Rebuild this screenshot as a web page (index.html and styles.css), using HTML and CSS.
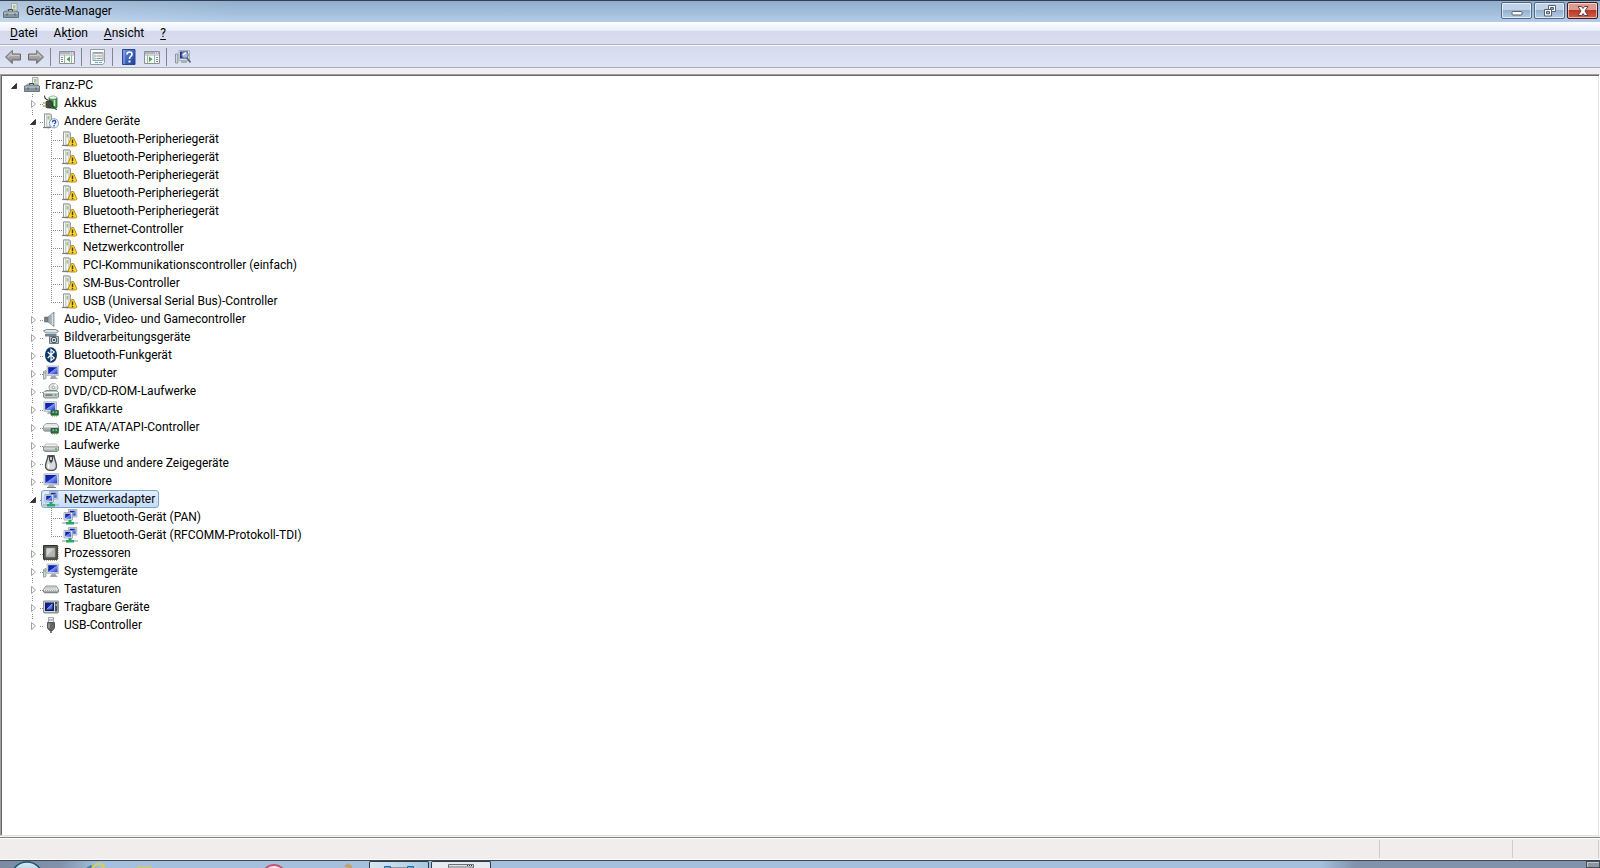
FILE: index.html
```html
<!DOCTYPE html>
<html lang="de">
<head>
<meta charset="utf-8">
<title>Geräte-Manager</title>
<link rel="stylesheet" href="styles.css">
</head>
<body>
<svg class="sprite" aria-hidden="true">
  <defs>
    <linearGradient id="metal" x1="0" y1="0" x2="0" y2="1"><stop offset="0" stop-color="#f4f5f5"/><stop offset="1" stop-color="#929a9e"/></linearGradient>
    <linearGradient id="screen" x1="0" y1="0" x2="1" y2="1"><stop offset="0" stop-color="#0a1ca0"/><stop offset=".45" stop-color="#1428b4"/><stop offset=".5" stop-color="#7d98f0"/><stop offset="1" stop-color="#2038c8"/></linearGradient>
    <linearGradient id="arrow" x1="0" y1="0" x2="0" y2="1"><stop offset="0" stop-color="#c4c4c4"/><stop offset="1" stop-color="#858585"/></linearGradient>
    <linearGradient id="help" x1="0" y1="0" x2="1" y2="1"><stop offset="0" stop-color="#6a90dc"/><stop offset="1" stop-color="#1e3ea0"/></linearGradient>
    <linearGradient id="orb" x1="0" y1="0" x2="0" y2="1"><stop offset="0" stop-color="#d4eaf4"/><stop offset="1" stop-color="#6c9cba"/></linearGradient>

    <symbol id="i-open" viewBox="0 0 19 18"><path d="M11.500 7.500v5h-5z" fill="#333" stroke="#222" stroke-width=".8"/></symbol>
    <symbol id="i-closed" viewBox="0 0 19 18"><path d="M7.500 6.500l4 3.500-4 3.500z" fill="#fff" stroke="#a2a2a2"/></symbol>

    <symbol id="i-tower" viewBox="0 0 16 16"><path d="M1.500.8h5.500l1.500 1v12l-3 1.200-4-1z" fill="#dde1dd" stroke="#82888a" stroke-width=".8"/><path d="M2.600 2v11.500" stroke="#fff"/><path d="M3.800 1.500h3v12h-3z" fill="#f4f6f2" stroke="#a3aaa3" stroke-width=".6"/><path d="M4.500 3h1.700v3.500H4.500z" fill="#9dc684"/><path d="M0 14.600h8" stroke="#6f7577"/></symbol>
    <symbol id="i-root" viewBox="0 0 16 16"><path d="M8.500.5h5.500v9H8.500z" fill="#e4e9e4" stroke="#949a9a" stroke-width=".8"/><path d="M10 2h2.500v3.500H10z" fill="#a4c890"/><path d="M1.500 9l2-2h9l2.500 2z" fill="#c6cfd4" stroke="#6b767c" stroke-width=".7"/><path d="M.5 9h15v5.500H.5z" fill="#8595a0" stroke="#55616a" stroke-width=".8"/><path d="M1 10h14" stroke="#d5dde2"/><path d="M5.500 8V6.500h4V8M4 10.500v2M12 10.500v2" stroke="#404d57" fill="none"/></symbol>
    <symbol id="i-battery" viewBox="0 0 16 16"><path d="M6 2.500q4.500-2 8 0v10q-3.500 2-8 0z" fill="#3b9d4b" stroke="#246330" stroke-width=".8"/><ellipse cx="10" cy="2.500" rx="3.700" ry="1.600" fill="#f2f4f0" stroke="#8f9a90" stroke-width=".6"/><path d="M11.500 5v6" stroke="#b9eab6" stroke-width="1.600"/><path d="M3 6.500q5-2 6.500 1.300v3.500q-2 3-6.500 1z" fill="#454941" stroke="#20241c" stroke-width=".7"/><path d="M0 8h3.500M0 11h3.500" stroke="#a48d4a" stroke-width="1.200"/><path d="M1.500.5q0 3.500 3.500 4.500M9 10q2 4 5 4.500" stroke="#30362d" stroke-width="1.100" fill="none"/></symbol>
    <symbol id="i-unknown" viewBox="0 0 16 16"><use href="#i-tower"/><circle cx="11" cy="10.300" r="4.600" fill="#eef4fc" stroke="#8598b4" stroke-width=".9"/><path d="M9.400 9.200q0-1.700 1.700-1.700t1.700 1.400q0 1-1.700 2.100" stroke="#2950a8" stroke-width="1.300" fill="none"/><path d="M10.400 12h1.300v1.400h-1.300z" fill="#2950a8"/></symbol>
    <symbol id="i-warn" viewBox="0 0 16 16"><use href="#i-tower"/><path d="M8 15l-2-1 3.500-7.500h2L15 14l-1.500 1z" fill="#fcd535" stroke="#b8901c" stroke-linejoin="round"/><path d="M10.500 8.500v3.500M10.500 12.800v1.400" stroke="#4a3700" stroke-width="1.400"/></symbol>
    <symbol id="i-audio" viewBox="0 0 16 16"><path d="M1.500 6h3.500v5H1.500z" fill="#747e84" stroke="#5b646a" stroke-width=".6"/><path d="M5 6l6-5v14.500L5 11z" fill="#a5afb5" stroke="#727c82" stroke-width=".7"/><path d="M9.500 3v11" stroke="#d9e0e4" stroke-width="1.500"/></symbol>
    <symbol id="i-imaging" viewBox="0 0 16 16"><path d="M.5 2l3-1.500h9L15.500 2l-2 2H3z" fill="#dce6e8" stroke="#617078" stroke-width=".8"/><path d="M2 5h11.500v2.500H2z" fill="#6a8791"/><path d="M6.500 7.500h9v7h-9z" fill="#b9c4c9" stroke="#526067" stroke-width=".8"/><circle cx="11" cy="11" r="2.800" fill="#f0f6f8" stroke="#36444c"/><circle cx="11" cy="11" r="1.300" fill="#2f608a"/></symbol>
    <symbol id="i-bt" viewBox="0 0 16 16"><ellipse cx="8" cy="8" rx="6" ry="7.800" fill="#0c3768"/><path d="M4.700 5l6.500 6L8 13.600V2.400L11.200 5l-6.500 6" fill="none" stroke="#fff" stroke-width="1.200"/></symbol>
    <symbol id="i-monitor" viewBox="0 0 16 16"><path d="M1 .8h14.500v11H1z" fill="#e2e5e8" stroke="#a1a9b0" stroke-width=".8"/><path d="M2.300 2h11.900v8.400H2.300z" fill="url(#screen)"/><path d="M6 12h4.500l1.500 2.500H4.500z" fill="#a9b3b9"/><path d="M4 14.500h9" stroke="#747d82"/></symbol>
    <symbol id="i-computer" viewBox="0 0 16 16"><path d="M4 1h11.800v9.500H4z" fill="#dfe3e7" stroke="#a3acb3" stroke-width=".7"/><path d="M5.200 2.200h9.400v7H5.200z" fill="url(#screen)"/><path d="M8.500 11h4l1 2h-6z" fill="#9da7ac"/><path d="M7 13.300h7.500" stroke="#889197"/><path d="M.5 6.500l2.500-1v8l-2.500.8z" fill="#d2d7d5" stroke="#80888b" stroke-width=".7"/><path d="M1.200 8h1.300" stroke="#65a650"/></symbol>
    <symbol id="i-drive" viewBox="0 0 16 16"><path d="M3 7h10l2.500 3H.5z" fill="#f1f2f1" stroke="#a0a5a4" stroke-width=".7"/><path d="M.5 10h15v3.500l-1.500 1H2l-1.500-1z" fill="url(#metal)" stroke="#747b7c" stroke-width=".8"/><path d="M12 12h2" stroke="#42b94a" stroke-width="1.400"/></symbol>
    <symbol id="i-dvd" viewBox="0 0 16 16"><ellipse cx="10.500" cy="4.500" rx="4.500" ry="4" fill="#dde2e0" stroke="#909695" stroke-width=".8"/><path d="M10.500 4.500l3-3" stroke="#fff" stroke-width="2"/><circle cx="10.500" cy="4.500" r="1.300" fill="#fff" stroke="#7a8281" stroke-width=".7"/><path d="M.5 9.500l2.500-2h10.500l2 2V14l-1.500 1h-12l-1.500-1z" fill="#bdc5c5" stroke="#707979" stroke-width=".8"/><path d="M1 9.500h14" stroke="#f2f4f4"/><path d="M2.500 12h7" stroke="#58635f" stroke-width="1.300"/><path d="M11.500 12h2" stroke="#42b94a" stroke-width="1.500"/></symbol>
    <symbol id="i-chip" viewBox="0 0 16 16"><path d="M8 9.500h7.300v4.700H8z" fill="#287548" stroke="#144c2b" stroke-width=".7"/><path d="M9.500 11.200H11M12.500 11.200H14" stroke="#b3d9b7" stroke-width="1.200"/><path d="M9 15h5" stroke="#9a8a31" stroke-dasharray="1 1"/></symbol>
    <symbol id="i-gpu" viewBox="0 0 16 16"><path d="M1 .8h12.500v9.500H1z" fill="#e2e5e8" stroke="#a1a9b0" stroke-width=".8"/><path d="M2.200 2h10v7h-10z" fill="url(#screen)"/><path d="M5 10.500h4l1 2.500H4z" fill="#a9b3b9"/><use href="#i-chip"/></symbol>
    <symbol id="i-ide" viewBox="0 0 16 16"><path d="M3 4.500h10.500L15.500 7v4.500l-1 .7H1.500l-1-1V7z" fill="url(#metal)" stroke="#858d8e" stroke-width=".8"/><path d="M1 7.300h14" stroke="#fff"/><use href="#i-chip"/></symbol>
    <symbol id="i-mouse" viewBox="0 0 16 16"><path d="M5 .7h6q.7 4 2 7.300Q15 15.500 8 15.500T3 8Q4.500 4 5 .7z" fill="#d8dcdd" stroke="#505758" stroke-width="1.400"/><path d="M5.500 1h5l-.8 5L8 8.500 6.300 6z" fill="#3c4243"/><path d="M8 2v3" stroke="#f4f4f4" stroke-width="1.500"/><path d="M5.500 9v4" stroke="#fff" stroke-width="1.500"/></symbol>
    <symbol id="i-net" viewBox="0 0 16 16"><path d="M6.500.5h8.300V8H6.500z" fill="#e1e6eb" stroke="#909ba4" stroke-width=".7"/><path d="M7.700 1.700h6v5h-6z" fill="url(#screen)"/><path d="M2 3.500h8.500V11H2z" fill="#edf0f3" stroke="#8994a0" stroke-width=".7"/><path d="M3.200 4.700h6v5h-6z" fill="url(#screen)"/><path d="M0 14h16" stroke="#a8b8b2" stroke-width="1.400"/><path d="M6.500 11h3v2H12v2.500H4V13h2.500z" fill="#28a568"/></symbol>
    <symbol id="i-cpu" viewBox="0 0 16 16"><path d="M15 1v14M1 15.300h14" stroke="#bda16b" stroke-width="1.400" stroke-dasharray="1 1"/><path d="M.5.500h13.800v13.800H.5z" fill="#555855" stroke="#303230"/><path d="M3 3h9v9H3z" fill="#b3b7b3" stroke="#8f938f" stroke-width=".7"/><path d="M3.500 11V3.500H11z" fill="#d2d5d2"/></symbol>
    <symbol id="i-keyboard" viewBox="0 0 16 16"><path d="M3 5h10.500l2 3.500V11l-1.200.8H1.700L.5 11V8.500z" fill="#e6e8e8" stroke="#7a8183" stroke-width=".9"/><path d="M3.500 6.500h10M2.500 8h12M2 9.500h13" stroke="#92999b" stroke-width=".8" stroke-dasharray="1 1"/><path d="M1 11h14" stroke="#656c6f"/></symbol>
    <symbol id="i-portable" viewBox="0 0 16 16"><path d="M.5 2h15v11.500H.5z" fill="#d2d6db" stroke="#7e868d" stroke-width=".9"/><path d="M2 3.500h9v8.500H2z" fill="#121e50"/><path d="M3.500 4.500h6v6h-6z" fill="url(#screen)"/><path d="M12 3h2.500v9.500H12z" fill="#4a535c"/><circle cx="13.300" cy="6" r=".8" fill="#e3e9ed"/><path d="M1 14.200h14" stroke="#a7afb5"/></symbol>
    <symbol id="i-usb" viewBox="0 0 16 16"><path d="M5.500.5h5v5h-5z" fill="#f0f1f1" stroke="#8c9292" stroke-width=".8"/><path d="M7 2v2M9 2v2" stroke="#888e8e"/><path d="M4.500 5.500h7V11l-2 2.500h-3l-2-2.500z" fill="#636768" stroke="#3e4243" stroke-width=".8"/><path d="M6 6.500V11" stroke="#aeb3b4" stroke-width="1.200"/><path d="M8 13.500V16" stroke="#3e4243" stroke-width="1.400"/></symbol>

    <symbol id="i-arrow" viewBox="0 0 16 16"><path d="M.5 8L7.300 1.500V5H15.500v6H7.300v3.500z" fill="url(#arrow)" stroke="#686868" stroke-linejoin="round"/><path d="M3 8l3.300-3v1.500h8" fill="none" stroke="#d9d9d9" stroke-width=".7"/></symbol>
    <symbol id="i-pane" viewBox="0 0 16 16"><path d="M.5 2.500h15v12H.5z" fill="#f7f8f8" stroke="#8b9197"/><path d="M1 3h14v2H1z" fill="#afb5ba"/><path d="M11 4h1M13 4h1" stroke="#fff"/><path d="M1 6h14M5.500 6v8M12.500 6v8" stroke="#a8afb4"/><path d="M2 8.500h2M2 10.500h2M2 12.500h2" stroke="#7f898e"/><path d="M11 7.500v5.500L7.500 10.200z" fill="#42a846"/></symbol>
    <symbol id="i-panerun" viewBox="0 0 16 16"><path d="M.5 2.500h15v12H.5z" fill="#f7f8f8" stroke="#8b9197"/><path d="M1 3h14v2H1z" fill="#afb5ba"/><path d="M11 4h1M13 4h1" stroke="#fff"/><path d="M1 6h14M3.500 6v8M10.500 6v8" stroke="#a8afb4"/><path d="M12 8.500h2M12 10.500h2M12 12.500h2" stroke="#7f898e"/><path d="M5 7.500V13l3.500-2.800z" fill="#42a846"/></symbol>
    <symbol id="i-props" viewBox="0 0 16 16"><path d="M.5.5h14v13l-1.500 2H.5z" fill="#fafafa" stroke="#969ba0"/><path d="M3 3.500h10v8H3z" fill="#eff2f4" stroke="#999fa5"/><path d="M3.500 4.500h9" stroke="#a5b2bd"/><path d="M4.500 7h1M4.500 9.500h1" stroke="#2d99bd" stroke-width="1.300"/><path d="M6.500 7H12M6.500 9.500H12" stroke="#909aa1"/><path d="M5 13.500h3M9 13.500h3" stroke="#55b5d0"/></symbol>
    <symbol id="i-scan" viewBox="0 0 16 16"><path d="M.5 5h2.300v9H.5z" fill="#d6dcdb" stroke="#798285" stroke-width=".8"/><path d="M4 1.500h10.500v10H4z" fill="#dfe4ea" stroke="#9aa4ae" stroke-width=".8"/><path d="M5 2.500h8v7H5z" fill="#1b2ea3"/><circle cx="10" cy="6" r="3.300" fill="#c7dcf8" fill-opacity=".8" stroke="#677783"/><path d="M8 6l3-2.500" stroke="#fff" stroke-width="1.300"/><path d="M12 9l3.500 4.500" stroke="#59646b" stroke-width="1.800"/><path d="M6 13h6" stroke="#969fa5" stroke-width="1.500"/></symbol>
  </defs>
</svg>

<div class="window">
  <header class="titlebar">
    <svg class="icon"><use href="#i-root"/></svg>
    <h1 class="title">Geräte-Manager</h1>
    <div class="controls">
      <button class="control" aria-label="Minimieren"><svg viewBox="0 0 16 12"><rect x="3" y="6.500" width="10" height="3.500" rx="1" fill="#fff" stroke="#59616b"/></svg></button>
      <button class="control" aria-label="Verkleinern"><svg viewBox="0 0 16 12"><path d="M6.500.5h7v6h-7z" fill="#fff" stroke="#59616b"/><path d="M8.500 2.500h3v2h-3z" fill="#8ba6c4" stroke="#59616b"/><path d="M2.500 4.500h7v6.500h-7z" fill="#fff" stroke="#59616b"/><path d="M4.500 6.500h3v2.300h-3z" fill="#9fb9d6" stroke="#59616b"/></svg></button>
      <button class="control control-close" aria-label="Schließen"><svg viewBox="0 0 16 12"><path d="M3 1.500h3.500l1.500 2 1.500-2H13L10 6l3 4.500H9.500L8 8.500l-1.500 2H3L6 6z" fill="#fff" stroke="#633c40"/></svg></button>
    </div>
  </header>

  <nav class="menubar">
    <button class="menu"><u>D</u>atei</button>
    <button class="menu">Ak<u>t</u>ion</button>
    <button class="menu"><u>A</u>nsicht</button>
    <button class="menu"><u>?</u></button>
  </nav>

  <div class="toolbar" role="toolbar" aria-label="Werkzeuge">
    <button class="tool" aria-label="Zurück"><svg class="icon"><use href="#i-arrow"/></svg></button>
    <button class="tool" aria-label="Vorwärts"><svg class="icon flip"><use href="#i-arrow"/></svg></button>
    <span class="separator"></span>
    <button class="tool" aria-label="Konsolenstruktur"><svg class="icon"><use href="#i-pane"/></svg></button>
    <span class="separator"></span>
    <button class="tool" aria-label="Eigenschaften"><svg class="icon"><use href="#i-props"/></svg></button>
    <span class="separator"></span>
    <button class="tool" aria-label="Hilfe"><svg class="icon" viewBox="0 0 16 16"><path d="M1.500.5H14v15H1.500z" fill="url(#help)" stroke="#294894"/><path d="M3 1v14" stroke="#91afe5"/><path d="M6 5.500q0-2.500 2.500-2.500T11 5.200q0 1.300-1.300 2.200T8.500 10" fill="none" stroke="#fff" stroke-width="1.600"/><path d="M7.500 11.500h2v2h-2z" fill="#fff"/></svg></button>
    <button class="tool" aria-label="Aktionsbereich"><svg class="icon"><use href="#i-panerun"/></svg></button>
    <span class="separator"></span>
    <button class="tool" aria-label="Nach geänderter Hardware suchen"><svg class="icon"><use href="#i-scan"/></svg></button>
  </div>

  <main class="pane">
    <ul class="tree">
      <li><div class="row"><button class="toggle" aria-label="Reduzieren"><svg><use href="#i-open"/></svg></button><svg class="icon"><use href="#i-root"/></svg><span class="label">Franz-PC</span></div>
        <ul class="level">
          <li><div class="row"><button class="toggle node" aria-label="Erweitern"><svg><use href="#i-closed"/></svg></button><svg class="icon"><use href="#i-battery"/></svg><span class="label">Akkus</span></div></li>
          <li><div class="row"><button class="toggle node" aria-label="Reduzieren"><svg><use href="#i-open"/></svg></button><svg class="icon"><use href="#i-unknown"/></svg><span class="label">Andere Geräte</span></div>
            <ul class="level sub">
              <li class="row"><span class="branch"></span><svg class="icon"><use href="#i-warn"/></svg><span class="label">Bluetooth-Peripheriegerät</span></li>
              <li class="row"><span class="branch"></span><svg class="icon"><use href="#i-warn"/></svg><span class="label">Bluetooth-Peripheriegerät</span></li>
              <li class="row"><span class="branch"></span><svg class="icon"><use href="#i-warn"/></svg><span class="label">Bluetooth-Peripheriegerät</span></li>
              <li class="row"><span class="branch"></span><svg class="icon"><use href="#i-warn"/></svg><span class="label">Bluetooth-Peripheriegerät</span></li>
              <li class="row"><span class="branch"></span><svg class="icon"><use href="#i-warn"/></svg><span class="label">Bluetooth-Peripheriegerät</span></li>
              <li class="row"><span class="branch"></span><svg class="icon"><use href="#i-warn"/></svg><span class="label">Ethernet-Controller</span></li>
              <li class="row"><span class="branch"></span><svg class="icon"><use href="#i-warn"/></svg><span class="label">Netzwerkcontroller</span></li>
              <li class="row"><span class="branch"></span><svg class="icon"><use href="#i-warn"/></svg><span class="label">PCI-Kommunikationscontroller (einfach)</span></li>
              <li class="row"><span class="branch"></span><svg class="icon"><use href="#i-warn"/></svg><span class="label">SM-Bus-Controller</span></li>
              <li class="row"><span class="branch last"></span><svg class="icon"><use href="#i-warn"/></svg><span class="label">USB (Universal Serial Bus)-Controller</span></li>
            </ul>
          </li>
          <li><div class="row"><button class="toggle node" aria-label="Erweitern"><svg><use href="#i-closed"/></svg></button><svg class="icon"><use href="#i-audio"/></svg><span class="label">Audio-, Video- und Gamecontroller</span></div></li>
          <li><div class="row"><button class="toggle node" aria-label="Erweitern"><svg><use href="#i-closed"/></svg></button><svg class="icon"><use href="#i-imaging"/></svg><span class="label">Bildverarbeitungsgeräte</span></div></li>
          <li><div class="row"><button class="toggle node" aria-label="Erweitern"><svg><use href="#i-closed"/></svg></button><svg class="icon"><use href="#i-bt"/></svg><span class="label">Bluetooth-Funkgerät</span></div></li>
          <li><div class="row"><button class="toggle node" aria-label="Erweitern"><svg><use href="#i-closed"/></svg></button><svg class="icon"><use href="#i-computer"/></svg><span class="label">Computer</span></div></li>
          <li><div class="row"><button class="toggle node" aria-label="Erweitern"><svg><use href="#i-closed"/></svg></button><svg class="icon"><use href="#i-dvd"/></svg><span class="label">DVD/CD-ROM-Laufwerke</span></div></li>
          <li><div class="row"><button class="toggle node" aria-label="Erweitern"><svg><use href="#i-closed"/></svg></button><svg class="icon"><use href="#i-gpu"/></svg><span class="label">Grafikkarte</span></div></li>
          <li><div class="row"><button class="toggle node" aria-label="Erweitern"><svg><use href="#i-closed"/></svg></button><svg class="icon"><use href="#i-ide"/></svg><span class="label">IDE ATA/ATAPI-Controller</span></div></li>
          <li><div class="row"><button class="toggle node" aria-label="Erweitern"><svg><use href="#i-closed"/></svg></button><svg class="icon"><use href="#i-drive"/></svg><span class="label">Laufwerke</span></div></li>
          <li><div class="row"><button class="toggle node" aria-label="Erweitern"><svg><use href="#i-closed"/></svg></button><svg class="icon"><use href="#i-mouse"/></svg><span class="label">Mäuse und andere Zeigegeräte</span></div></li>
          <li><div class="row"><button class="toggle node" aria-label="Erweitern"><svg><use href="#i-closed"/></svg></button><svg class="icon"><use href="#i-monitor"/></svg><span class="label">Monitore</span></div></li>
          <li><div class="row"><button class="toggle node" aria-label="Reduzieren"><svg><use href="#i-open"/></svg></button><span class="selected"><svg class="icon"><use href="#i-net"/></svg><span class="label">Netzwerkadapter</span></span></div>
            <ul class="level sub">
              <li class="row"><span class="branch"></span><svg class="icon"><use href="#i-net"/></svg><span class="label">Bluetooth-Gerät (PAN)</span></li>
              <li class="row"><span class="branch last"></span><svg class="icon"><use href="#i-net"/></svg><span class="label">Bluetooth-Gerät (RFCOMM-Protokoll-TDI)</span></li>
            </ul>
          </li>
          <li><div class="row"><button class="toggle node" aria-label="Erweitern"><svg><use href="#i-closed"/></svg></button><svg class="icon"><use href="#i-cpu"/></svg><span class="label">Prozessoren</span></div></li>
          <li><div class="row"><button class="toggle node" aria-label="Erweitern"><svg><use href="#i-closed"/></svg></button><svg class="icon"><use href="#i-computer"/></svg><span class="label">Systemgeräte</span></div></li>
          <li><div class="row"><button class="toggle node" aria-label="Erweitern"><svg><use href="#i-closed"/></svg></button><svg class="icon"><use href="#i-keyboard"/></svg><span class="label">Tastaturen</span></div></li>
          <li><div class="row"><button class="toggle node" aria-label="Erweitern"><svg><use href="#i-closed"/></svg></button><svg class="icon"><use href="#i-portable"/></svg><span class="label">Tragbare Geräte</span></div></li>
          <li><div class="row"><button class="toggle node end" aria-label="Erweitern"><svg><use href="#i-closed"/></svg></button><svg class="icon"><use href="#i-usb"/></svg><span class="label">USB-Controller</span></div></li>
        </ul>
      </li>
    </ul>
  </main>

  <footer class="statusbar"><span class="cell cell-main"></span><span class="cell cell-mid"></span><span class="cell cell-end"></span></footer>
</div>

<div class="taskbar">
  <svg class="launchers" viewBox="0 0 367 7" aria-hidden="true">
    <circle cx="27" cy="17" r="16" fill="url(#orb)" stroke="#22516f" stroke-width="1.500"/>
    <path d="M86 7l5-3 2 3z" fill="#497da6"/>
    <path d="M92 7q5-7 12-2l-1 2" fill="none" stroke="#d9cf55" stroke-width="2"/>
    <path d="M137 5h15v2h-15z" fill="#c6c783"/>
    <circle cx="274" cy="16" r="12" fill="#f2e9ef" stroke="#cf5470" stroke-width="2"/>
    <path d="M344 5l4-3 4 3v2h-4z" fill="#c2a36a"/>
  </svg>
  <button class="task" aria-label="Verbindungen"><svg viewBox="0 0 32 6"><path d="M6 5.500h20" stroke="#8d989f" stroke-width="1"/><path d="M1.500 4.500h6V8h-6zM24.500 4.500h6V8h-6z" fill="#62aee0" stroke="#22699f"/></svg></button>
  <button class="task task-active" aria-label="Geräte-Manager"><svg viewBox="0 0 32 6"><path d="M3.500 2.500h25V8h-25z" fill="#dadfe4" stroke="#6a7178"/><path d="M4 5h24" stroke="#777f86"/><path d="M22 3.500h5" stroke="#333" stroke-dasharray="1 1"/></svg></button>
  <button class="desktop" aria-label="Desktop anzeigen"></button>
</div>
</body>
</html>
```
FILE: styles.css
```css
* { box-sizing: border-box; }

body {
  margin: 0;
  height: 100vh;
  display: flex;
  flex-direction: column;
  overflow: hidden;
  background: #f0f0f0;
  color: #000;
  font: 12px/18px Roboto, "Open Sans", sans-serif;
}

button {
  margin: 0;
  padding: 0;
  border: 0;
  background: none;
  color: inherit;
  font: inherit;
}

ul { list-style: none; margin: 0; padding: 0; }

.sprite { position: absolute; width: 0; height: 0; }

.icon { width: 16px; height: 16px; flex: none; }

.flip { transform: scaleX(-1); }

.window {
  flex: 1;
  min-height: 0;
  display: flex;
  flex-direction: column;
}

.titlebar {
  height: 22px;
  flex: none;
  display: flex;
  align-items: center;
  gap: 7px;
  padding-left: 3px;
  padding-bottom: 1px;
  border-top: 1px solid #333f50;
  background: linear-gradient(90deg, #ffffff40, #ffffff00 240px), linear-gradient(#90adcc, #b2cce8);
}

.title { flex: 1; margin: 0; font-size: 12px; font-weight: 400; }

.controls { display: flex; gap: 2px; align-self: flex-start; padding: 1px 2px 0 0; }

.control {
  width: 31px;
  height: 17px;
  display: flex;
  justify-content: center;
  align-items: center;
  border: 1px solid #536a87;
  border-radius: 2px;
  box-shadow: inset 0 0 0 1px #ffffff90;
  background: linear-gradient(#bfd2e7 50%, #94b0ce 50%, #b4cee8);
}

.control svg { width: 16px; height: 12px; }

.control-close { border-color: #48161c; background: linear-gradient(#dc9b90 45%, #b93824 50%, #ce6148); }

.menubar {
  height: 23px;
  flex: none;
  display: flex;
  align-items: center;
  padding-left: 2px;
  border-bottom: 1px solid #aeb2bd;
  background: linear-gradient(#fdfeff, #e7ecf7 9px, #d4d9ec 9px, #d8ddef);
}

.menu { padding: 0 8px; }

.menu u { text-underline-offset: 2px; }

.toolbar {
  height: 23px;
  flex: none;
  display: flex;
  align-items: center;
  gap: 7px;
  padding-left: 5px;
  border-top: 1px solid #f8f9fd;
  border-bottom: 1px solid #a9adb8;
  background: linear-gradient(#d4d9ec, #dfe4f5);
}

.tool { display: flex; }

.separator { width: 1px; height: 18px; margin: 0 1px 0 -1px; background: #81858e; }

.pane {
  flex: 1;
  min-height: 0;
  margin-top: 6px;
  border: 1px solid;
  border-color: #a0a0a0 #fff #e3e3e3 #a0a0a0;
  box-shadow: inset 1px 1px 0 #696969, inset -1px 0 0 #e3e3e3;
  background: #fff;
  padding: 1px 4px;
  overflow: hidden;
}

.row { height: 18px; display: flex; align-items: center; white-space: nowrap; }

.toggle { width: 19px; height: 18px; flex: none; display: flex; }

.toggle svg { width: 19px; height: 18px; }

.level { padding-left: 19px; }

.label { margin-left: 5px; }

/* Dotted guides joining the entries of one level */
.node {
  background:
    repeating-linear-gradient(#8c8c8c 0 1px, #fff0 1px 2px) 8px 0 / 1px 3px no-repeat,
    linear-gradient(#8c8c8c, #8c8c8c) 8px 16px / 1px 1px no-repeat,
    repeating-linear-gradient(90deg, #8c8c8c 0 1px, #fff0 1px 2px) 16px 10px / 3px 1px no-repeat;
}

.end {
  background:
    repeating-linear-gradient(#8c8c8c 0 1px, #fff0 1px 2px) 8px 0 / 1px 3px no-repeat,
    repeating-linear-gradient(90deg, #8c8c8c 0 1px, #fff0 1px 2px) 16px 10px / 3px 1px no-repeat;
}

.sub { background: repeating-linear-gradient(#8c8c8c 0 1px, #fff0 1px 2px) 8px 0 / 1px 100% no-repeat; }

.branch {
  width: 19px;
  height: 18px;
  flex: none;
  background:
    repeating-linear-gradient(#8c8c8c 0 1px, #fff0 1px 2px) 8px 0 / 1px 18px no-repeat,
    repeating-linear-gradient(90deg, #8c8c8c 0 1px, #fff0 1px 2px) 8px 10px / 11px 1px no-repeat;
}

.last {
  background:
    repeating-linear-gradient(#8c8c8c 0 1px, #fff0 1px 2px) 8px 0 / 1px 10px no-repeat,
    repeating-linear-gradient(90deg, #8c8c8c 0 1px, #fff0 1px 2px) 8px 10px / 11px 1px no-repeat;
}

.selected {
  display: flex;
  align-items: center;
  height: 18px;
  margin-left: -2px;
  padding: 0 3px 0 1px;
  border: 1px solid #7da2ce;
  border-radius: 3px;
  background: linear-gradient(#e4effc, #c4dcf8);
}

.statusbar {
  height: 23px;
  flex: none;
  display: flex;
  margin-top: 1px;
  padding: 2px 1px 1px 0;
  border-top: 1px solid #858585;
  border-bottom: 1px solid #fff;
  background: #f0edec;
  box-shadow: inset 0 1px 0 #fff;
}

.cell { border-right: 1px solid #cfcccb; }
.cell-main { flex: 1; }
.cell-mid { width: 133px; }
.cell-end { width: 86px; }

.taskbar {
  height: 8px;
  flex: none;
  display: flex;
  gap: 2px;
  border-top: 1px solid #3c4856;
  background: linear-gradient(90deg, #7c8ba1, #8092aa 60px, #a5c0de 100px, #a5c0de 1320px, #8193aa 1355px, #8193aa);
  overflow: hidden;
}

.launchers { width: 367px; height: 7px; flex: none; }

.task {
  width: 60px;
  display: flex;
  justify-content: center;
  border: 1px solid #303c48;
  border-bottom: 0;
  border-radius: 2px 2px 0 0;
  background: linear-gradient(90deg, #d8e7f2, #a9c7df);
}

.task svg { width: 32px; height: 6px; flex: none; }

.task-active { background: #e5ebf1; }

.desktop { width: 14px; margin-left: auto; border: 1px solid #424d58; background: #8b969f; box-shadow: inset 1px 1px 0 #c0c9d0; }
```
